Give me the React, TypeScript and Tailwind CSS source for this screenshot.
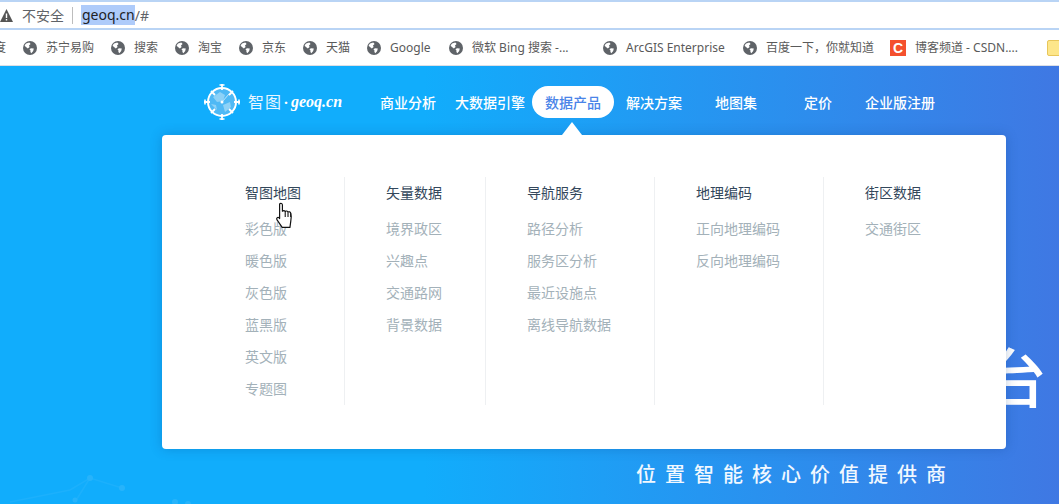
import type { ReactNode } from "react";

const cjk = "font-['Noto_Sans','Noto_Sans_CJK_SC',sans-serif]";

function GlobeIcon() {
  return (
    <svg width="14" height="14" viewBox="0 0 14 14" className="shrink-0">
      <circle cx="7" cy="7" r="7" fill="#5f6368" />
      <path d="M3 2.600 6.300 1.600 7.600 3 6 4.600 6.600 6 4.800 7.600 2.400 5.600 1.600 4.400Z" fill="#fff" />
      <path d="M8 7.200 10.800 7.600 10.200 10 8.400 12.200 7.400 11 7.400 9.200 6.400 8.200Z" fill="#fff" />
    </svg>
  );
}

function Bookmark({ label, className, icon }: { label: string; className: string; icon?: ReactNode }) {
  return (
    <div className={`flex items-center gap-[9px] shrink-0 ${className}`}>
      {icon ?? <GlobeIcon />}
      <span className="text-[12px] text-[#5a5a5a] whitespace-nowrap">{label}</span>
    </div>
  );
}

function CsdnIcon() {
  return (
    <div className="w-4 h-4 bg-[#f4502e] text-white text-[14px] leading-4 text-center font-bold font-['Liberation_Sans',sans-serif]">
      C
    </div>
  );
}

function Logo() {
  return (
    <svg width="38" height="38" viewBox="0 0 38 38" className="shrink-0">
      <circle cx="19" cy="19" r="13" fill="#4fb9f5" />
      <path d="M10 14l7-5 5 3-2 6-6 1zM20 22l7-3 1 5-6 5zM8 21l5 1 1 5z" fill="#8ed2f7" />
      <path d="M19 19 26 11" stroke="#d9f1fd" strokeWidth="0.800" />
      <circle cx="19" cy="19" r="14" fill="none" stroke="#fff" strokeWidth="2" />
      <path d="M19 1v6M19 31v6M1 19h6M31 19h6M8 8l4 4M30 8l-4 4M8 30l4-4M30 30l-4-4" stroke="#fff" strokeWidth="1.800" fill="none" />
      <path d="M16.500 2h5M16.500 36h5M2 16.500v5M36 16.500v5" stroke="#fff" strokeWidth="1.600" fill="none" />
      <circle cx="19" cy="19" r="1.500" fill="#fff" />
    </svg>
  );
}

function HandCursor() {
  return (
    <svg width="20" height="28" viewBox="0 0 18 26" className="absolute left-[275px] top-[136px]">
      <path
        d="M4 1.800c1-1 2.600-.5 2.600 1v5.800c.8-1 2.200-.8 2.600.2.800-.8 2.200-.5 2.600.5.900-.6 2.300-.1 2.500 1 .6 2.500.6 5 .1 7.200L13.600 23.500H6.400L1.600 16.600c-1-1.500.5-3 1.900-2L4 15.400Z"
        fill="#fff"
        stroke="#111"
        strokeWidth="1.100"
        strokeLinejoin="round"
      />
      <path d="M9.200 9v5M11.800 9.500V14M14.300 10.500V14" stroke="#111" strokeWidth="1" fill="none" />
    </svg>
  );
}

const columns = [
  { title: "智图地图", width: "w-[183px] pl-[83px]", items: ["彩色版", "暖色版", "灰色版", "蓝黑版", "英文版", "专题图"] },
  { title: "矢量数据", width: "w-[141px] pl-[41px]", items: ["境界政区", "兴趣点", "交通路网", "背景数据"] },
  { title: "导航服务", width: "w-[169px] pl-[41px]", items: ["路径分析", "服务区分析", "最近设施点", "离线导航数据"] },
  { title: "地理编码", width: "w-[169px] pl-[41px]", items: ["正向地理编码", "反向地理编码"] },
  { title: "街区数据", width: "w-[182px] pl-[41px]", items: ["交通街区"] },
];

const navItems = [
  { label: "商业分析", className: "" },
  { label: "大数据引擎", className: "ml-[19px]" },
];

const navItemsRight = [
  { label: "解决方案", className: "ml-[12px]" },
  { label: "地图集", className: "ml-[33px]" },
  { label: "定价", className: "ml-[47px]" },
  { label: "企业版注册", className: "ml-[33px]" },
];

export default function App() {
  return (
    <div className={`w-[1059px] h-[504px] overflow-hidden relative bg-white ${cjk}`}>
      {/* address bar */}
      <div className="h-[30px] border-y-2 border-[#b9d4f5] flex items-center bg-white">
        <svg width="14" height="13" viewBox="0 0 14 13" className="shrink-0">
          <path d="M6.500 0 13 13H0Z" fill="#555" />
          <path d="M5.800 4.500h1.400v4.500H5.800zM5.800 10h1.400v1.500H5.800z" fill="#fff" />
        </svg>
        <span className="ml-[8px] text-[14px] text-[#5f6368]">不安全</span>
        <span className="ml-[8px] w-px h-[17px] bg-[#bdbdbd]" />
        <span className="ml-[8px] pl-px text-[14px] text-[#202124] bg-[#aecbfa] h-[20px] leading-[20px]">geoq.cn</span>
        <span className="text-[14px] text-[#5f6368]">/#</span>
      </div>

      {/* bookmarks */}
      <div className="h-[36px] flex items-center bg-white border-b border-[#dcdfe6] overflow-hidden">
        <span className="text-[12px] text-[#5a5a5a] w-[29px] -ml-[6px] shrink-0">度</span>
        <Bookmark label="苏宁易购" className="w-[88px]" />
        <Bookmark label="搜索" className="w-[64px]" />
        <Bookmark label="淘宝" className="w-[64px]" />
        <Bookmark label="京东" className="w-[64px]" />
        <Bookmark label="天猫" className="w-[64px]" />
        <Bookmark label="Google" className="w-[82px]" />
        <Bookmark label="微软 Bing 搜索 -..." className="w-[154px]" />
        <Bookmark label="ArcGIS Enterprise" className="w-[140px]" />
        <Bookmark label="百度一下，你就知道" className="w-[147px]" />
        <Bookmark label="博客频道 - CSDN...." className="w-[157px]" icon={<CsdnIcon />} />
        <div className="w-[14px] h-[16px] bg-[#fde68a] border border-[#e8c65a] rounded-[2px] shrink-0" />
      </div>

      {/* hero */}
      <div className="h-[438px] relative bg-[linear-gradient(90deg,#11adfc_40%,#3f78e3_100%)]">
        <div className="flex items-center h-[72px] pl-[203px] text-white text-[14px] font-medium">
          <div className="w-[177px] flex items-center shrink-0">
            <Logo />
            <span className="ml-[7px] text-[16px] font-normal tracking-[1px] whitespace-nowrap text-[#e8f6ff]">智图</span>
            <span className="ml-[2px] text-[14px] font-bold">·</span>
            <span className="ml-[3px] font-['Liberation_Serif',serif] italic font-bold text-[16px] leading-none whitespace-nowrap">
              geoq.cn
            </span>
          </div>
          {navItems.map((item) => (
            <span key={item.label} className={`whitespace-nowrap ${item.className}`}>
              {item.label}
            </span>
          ))}
          <span className="ml-[7px] w-[82px] h-[32px] rounded-full bg-white text-[#4a84e8] flex items-center justify-center whitespace-nowrap">
            数据产品
          </span>
          {navItemsRight.map((item) => (
            <span key={item.label} className={`whitespace-nowrap ${item.className}`}>
              {item.label}
            </span>
          ))}
        </div>

        {/* big title partly hidden by the menu */}
        <span className="absolute left-[983px] top-[280px] text-[64px] leading-none text-white font-medium">台</span>

        <div className="absolute left-[636px] top-[395px] text-[20px] leading-[28px] tracking-[9px] text-[#f1f8ff] font-medium whitespace-nowrap">
          位置智能核心价值提供商
        </div>

        {/* faint map lines at the foot of the banner */}
        <svg width="640" height="60" viewBox="0 0 640 60" className="absolute left-0 bottom-0 opacity-50">
          <path d="M10 58 70 46 90 34 122 44M90 34 75 58" stroke="#27b4fd" strokeWidth="1.500" fill="none" />
          <circle cx="90" cy="34" r="3" fill="#3dbafb" />
          <circle cx="122" cy="44" r="3" fill="#3dbafb" />
          <circle cx="75" cy="56" r="2.500" fill="#3dbafb" />
          <circle cx="175" cy="58" r="3" fill="#3dbafb" />
          <circle cx="188" cy="60" r="3" fill="#3dbafb" />
        </svg>

        {/* dropdown */}
        <div className="absolute left-[162px] top-[69px] w-[844px] h-[314px] bg-white rounded-[4px] shadow-[0_0_12px_rgba(0,50,120,0.25)]">
          <div className="absolute left-[400px] -top-[13px] w-0 h-0 border-x-[10px] border-x-transparent border-b-[13px] border-b-white" />
          <div className="flex pt-[42px]">
            {columns.map((col, i) => (
              <div
                key={col.title}
                className={`h-[228px] ${col.width} ${i < columns.length - 1 ? "border-r border-[#eef0f2]" : ""}`}
              >
                <div className="text-[14px] leading-[32px] h-[32px] mb-[4px] text-[#33475b]">{col.title}</div>
                {col.items.map((item) => (
                  <div key={item} className="text-[14px] leading-[32px] h-[32px] text-[#a3b1b9]">
                    {item}
                  </div>
                ))}
              </div>
            ))}
          </div>
        </div>
        <HandCursor />
      </div>
    </div>
  );
}
